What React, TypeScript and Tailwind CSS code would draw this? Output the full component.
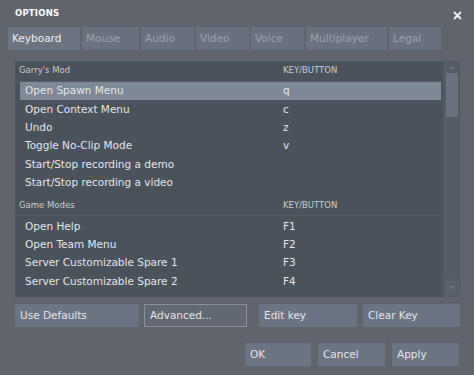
import React from "react";

const font = { fontFamily: '"DejaVu Sans", Verdana, sans-serif' };

function Row({ label, k, selected }: { label: string; k?: string; selected?: boolean }) {
  return (
    <div className={`flex h-[18.4px] items-center ml-[5px] mr-[2px] ${selected ? "bg-[#7e8997]" : ""}`}>
      <div className="w-[263px] pl-[5px] text-[10.5px] text-[#e4e6e9] whitespace-nowrap">{label}</div>
      <div className="text-[10.5px] text-[#e4e6e9]">{k}</div>
    </div>
  );
}

function Header({ title, h }: { title: string; h: string }) {
  return (
    <div className={`flex items-end ${h} pb-[4px] border-b border-[#555d67] mr-[2px]`}>
      <div className="w-[268px] pl-[4px] text-[8.5px] text-[#c9ccd1] whitespace-nowrap">{title}</div>
      <div className="text-[8.5px] text-[#c9ccd1]">KEY/BUTTON</div>
    </div>
  );
}

function Btn({ children, w, active }: { children: React.ReactNode; w: string; active?: boolean }) {
  return (
    <div
      className={`${w} h-[23px] flex items-center pl-[5px] text-[10.5px] text-[#e4e6e9] ${
        active ? "bg-[#616873] border border-[#8a9099]" : "bg-[#6b7482]"
      }`}
    >
      {children}
    </div>
  );
}

export default function App() {
  const tabs = [
    ["Keyboard", "w-[72px]"],
    ["Mouse", "w-[57px]"],
    ["Audio", "w-[53px]"],
    ["Video", "w-[53px]"],
    ["Voice", "w-[53px]"],
    ["Multiplayer", "w-[81px]"],
    ["Legal", "w-[52px]"],
  ];
  return (
    <div className="w-[474px] h-[375px] bg-[#60646c] relative overflow-hidden" style={font}>
      <div className="flex items-center justify-between h-[27px] pl-[15px] pr-[12px]">
        <div className="text-[8.5px] font-bold text-white tracking-[0.2px]">OPTIONS</div>
        <svg width="9" height="9" viewBox="0 0 9 9" className="mt-[3px]">
          <path d="M1 1 L8 8 M8 1 L1 8" stroke="#eef0f2" strokeWidth="1.8" />
        </svg>
      </div>
      <div className="flex gap-[2px] pl-[8px] h-[23px]">
        {tabs.map(([t, w], i) => (
          <div
            key={t}
            className={`${w} flex items-center pl-[4px] text-[10.5px] whitespace-nowrap ${
              i === 0 ? "bg-[#6c7482] text-[#eef0f2]" : "bg-[#697181] text-[#9aa1ab]"
            }`}
          >
            {t}
          </div>
        ))}
      </div>
      <div className="ml-[15px] mt-[11px] w-[445px] h-[236px] bg-[#4a525c] flex">
        <div className="flex-1 flex flex-col">
          <Header title="Garry's Mod" h="h-[21px]" />
          <Row label="Open Spawn Menu" k="q" selected />
          <Row label="Open Context Menu" k="c" />
          <Row label="Undo" k="z" />
          <Row label="Toggle No-Clip Mode" k="v" />
          <Row label="Start/Stop recording a demo" />
          <Row label="Start/Stop recording a video" />
          <Header title="Game Modes" h="h-[24px]" />
          <div className="h-[1px]" />
          <Row label="Open Help" k="F1" />
          <Row label="Open Team Menu" k="F2" />
          <Row label="Server Customizable Spare 1" k="F3" />
          <Row label="Server Customizable Spare 2" k="F4" />
        </div>
        <div className="w-[17px] bg-[#535b65] flex flex-col items-center">
          <div className="h-[12px] w-full flex items-center justify-center">
            <div className="w-0 h-0 border-l-[3px] border-r-[3px] border-b-[3px] border-l-transparent border-r-transparent border-b-[#6a727d]" />
          </div>
          <div className="w-[12px] h-[44px] bg-[#6a7380]" />
          <div className="flex-1" />
          <div className="h-[16px] w-[14px] bg-[#59616b] flex items-center justify-center mb-[2px]">
            <div className="w-0 h-0 border-l-[3px] border-r-[3px] border-t-[3px] border-l-transparent border-r-transparent border-t-[#6e7681]" />
          </div>
        </div>
      </div>
      <div className="flex ml-[15px] mt-[7px]">
        <Btn w="w-[124px]">Use Defaults</Btn>
        <div className="w-[5px]" />
        <Btn w="w-[103px]" active>Advanced...</Btn>
        <div className="w-[12px]" />
        <Btn w="w-[98px]">Edit key</Btn>
        <div className="w-[6px]" />
        <Btn w="w-[97px]">Clear Key</Btn>
      </div>
      <div className="flex ml-[245px] mt-[16px] gap-[7px]">
        <Btn w="w-[66px]">OK</Btn>
        <Btn w="w-[67px]">Cancel</Btn>
        <Btn w="w-[67px]">Apply</Btn>
      </div>
    </div>
  );
}
